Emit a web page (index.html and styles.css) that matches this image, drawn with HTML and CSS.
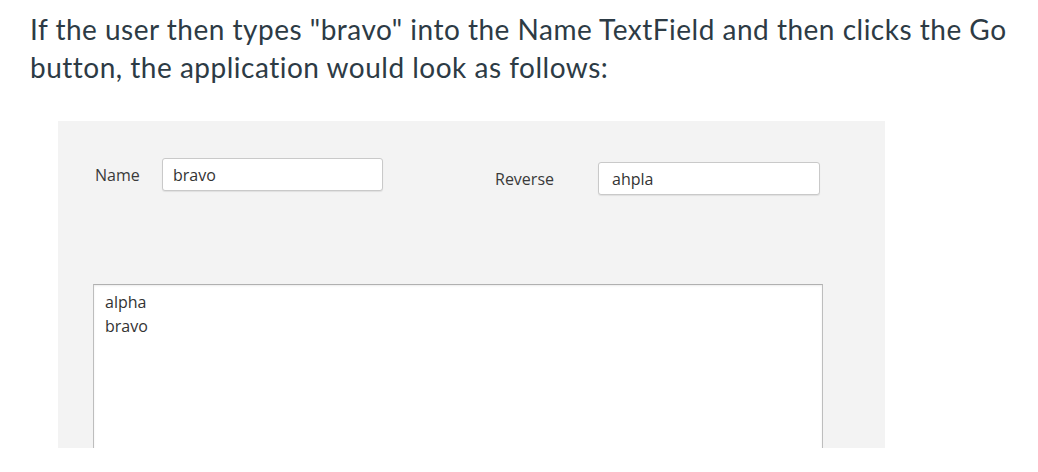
FILE: index.html
```html
<!DOCTYPE html>
<html>
<head>
<meta charset="utf-8">
<link rel="stylesheet" href="styles.css">
</head>
<body>
<p class="intro">If the user then types "bravo" into the Name TextField and then clicks the Go button, the application would look as follows:</p>
<div class="app">
  <div class="row">
    <div class="group">
      <span class="label">Name</span>
      <div class="field name-field">bravo</div>
    </div>
    <div class="group reverse">
      <span class="label">Reverse</span>
      <div class="field reverse-field">ahpla</div>
    </div>
  </div>
  <div class="area">
    <div class="line">alpha</div>
    <div class="line">bravo</div>
  </div>
</div>
</body>
</html>
```
FILE: styles.css
```css
html, body {
  margin: 0;
  padding: 0;
  background: #ffffff;
}
body {
  width: 1038px;
  height: 472px;
  overflow: hidden;
}
.intro {
  margin: 0;
  padding: 10px 0 0 30px;
  width: 990px;
  font-family: Lato, "Liberation Sans", sans-serif;
  font-size: 28px;
  letter-spacing: 0.5px;
  line-height: 38px;
  color: #2d3b45;
}
.app {
  margin: 35px 0 0 58px;
  width: 827px;
  height: 327px;
  background: #f3f3f3;
  overflow: hidden;
  font-family: "Open Sans", "Noto Sans", sans-serif;
  font-size: 16px;
  color: #3a3a3a;
  box-sizing: border-box;
  padding: 37px 0 0 35px;
}
.row {
  display: flex;
  align-items: flex-start;
}
.group {
  display: flex;
  align-items: center;
}
.label {
  width: 69px;
  padding-left: 2px;
  box-sizing: border-box;
}
.reverse {
  margin-left: 110px;
  margin-top: 4px;
}
.reverse .label {
  width: 105px;
}
.field {
  height: 33px;
  box-sizing: border-box;
  background: #ffffff;
  border: 1px solid #c9c9c9;
  border-radius: 3px;
  box-shadow: 0 1px 1px rgba(0,0,0,0.08);
  padding: 0 10px;
  display: flex;
  align-items: center;
  color: #333333;
}
.name-field {
  width: 221px;
}
.reverse-field {
  width: 222px;
  padding-left: 13px;
}
.area {
  margin-top: 89px;
  width: 730px;
  height: 200px;
  box-sizing: border-box;
  background: #ffffff;
  border: 1px solid #bdbdbd;
  border-top-color: #b0b0b0;
  box-shadow: inset 0 1px 2px rgba(0,0,0,0.08);
  padding: 5px 11px;
  color: #333333;
  line-height: 24px;
}
```
